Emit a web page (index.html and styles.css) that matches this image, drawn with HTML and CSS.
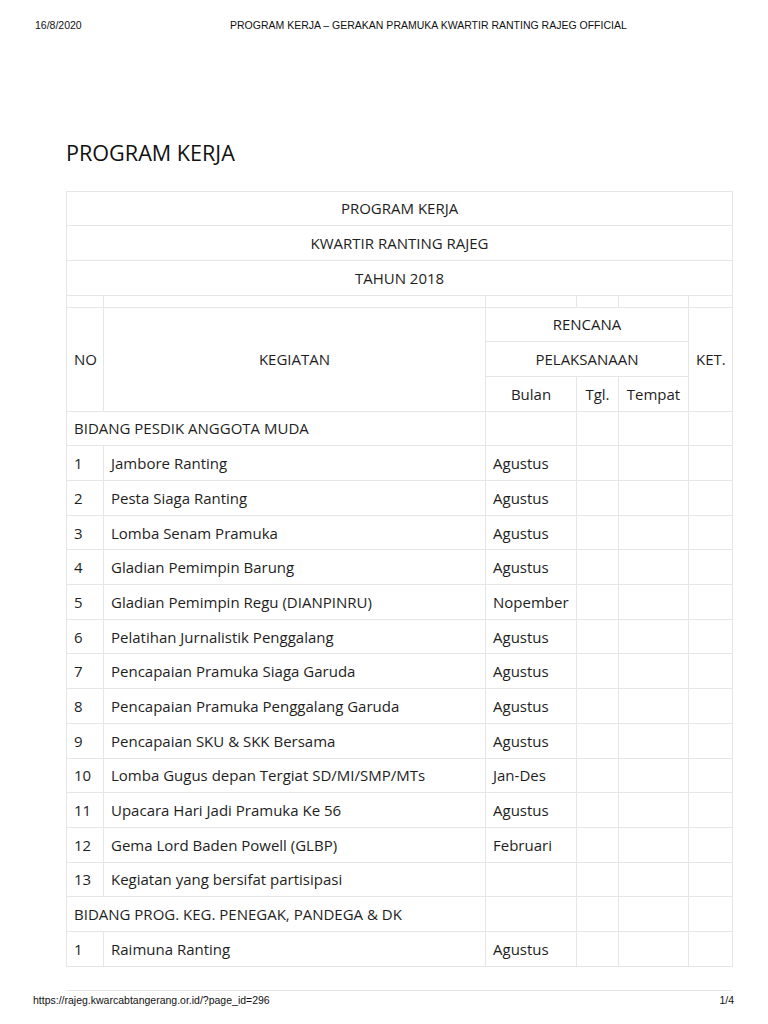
FILE: index.html
```html
<!DOCTYPE html>
<html lang="id">
<head>
<meta charset="utf-8">
<title>PROGRAM KERJA – GERAKAN PRAMUKA KWARTIR RANTING RAJEG OFFICIAL</title>
<link rel="stylesheet" href="styles.css">
</head>
<body>
<div class="page">
  <header class="print-head">
    <span class="print-date">16/8/2020</span>
    <span class="print-title">PROGRAM KERJA – GERAKAN PRAMUKA KWARTIR RANTING RAJEG OFFICIAL</span>
  </header>

  <main class="content">
    <h1 class="page-title">PROGRAM KERJA</h1>
    <table class="prog">
      <colgroup>
        <col class="c-no"><col class="c-keg"><col class="c-bulan"><col class="c-tgl"><col class="c-tempat"><col class="c-ket">
      </colgroup>
      <tbody>
        <tr><td colspan="6" class="center">PROGRAM KERJA</td></tr>
        <tr><td colspan="6" class="center">KWARTIR RANTING RAJEG</td></tr>
        <tr><td colspan="6" class="center">TAHUN 2018</td></tr>
        <tr class="spacer"><td></td><td></td><td></td><td></td><td></td><td></td></tr>
        <tr>
          <td rowspan="3">NO</td>
          <td rowspan="3" class="center">KEGIATAN</td>
          <td colspan="3" class="center">RENCANA</td>
          <td rowspan="3">KET.</td>
        </tr>
        <tr><td colspan="3" class="center">PELAKSANAAN</td></tr>
        <tr><td class="center">Bulan</td><td class="center">Tgl.</td><td class="center">Tempat</td></tr>
        <tr><td colspan="2">BIDANG PESDIK ANGGOTA MUDA</td><td></td><td></td><td></td><td></td></tr>
        <tr><td>1</td><td>Jambore Ranting</td><td>Agustus</td><td></td><td></td><td></td></tr>
        <tr><td>2</td><td>Pesta Siaga Ranting</td><td>Agustus</td><td></td><td></td><td></td></tr>
        <tr><td>3</td><td>Lomba Senam Pramuka</td><td>Agustus</td><td></td><td></td><td></td></tr>
        <tr><td>4</td><td>Gladian Pemimpin Barung</td><td>Agustus</td><td></td><td></td><td></td></tr>
        <tr><td>5</td><td>Gladian Pemimpin Regu (DIANPINRU)</td><td>Nopember</td><td></td><td></td><td></td></tr>
        <tr><td>6</td><td>Pelatihan Jurnalistik Penggalang</td><td>Agustus</td><td></td><td></td><td></td></tr>
        <tr><td>7</td><td>Pencapaian Pramuka Siaga Garuda</td><td>Agustus</td><td></td><td></td><td></td></tr>
        <tr><td>8</td><td>Pencapaian Pramuka Penggalang Garuda</td><td>Agustus</td><td></td><td></td><td></td></tr>
        <tr><td>9</td><td>Pencapaian SKU &amp; SKK Bersama</td><td>Agustus</td><td></td><td></td><td></td></tr>
        <tr><td>10</td><td>Lomba Gugus depan Tergiat SD/MI/SMP/MTs</td><td>Jan-Des</td><td></td><td></td><td></td></tr>
        <tr><td>11</td><td>Upacara Hari Jadi Pramuka Ke 56</td><td>Agustus</td><td></td><td></td><td></td></tr>
        <tr><td>12</td><td>Gema Lord Baden Powell (GLBP)</td><td>Februari</td><td></td><td></td><td></td></tr>
        <tr><td>13</td><td>Kegiatan yang bersifat partisipasi</td><td></td><td></td><td></td><td></td></tr>
        <tr><td colspan="2">BIDANG PROG. KEG. PENEGAK, PANDEGA &amp; DK</td><td></td><td></td><td></td><td></td></tr>
        <tr><td>1</td><td>Raimuna Ranting</td><td>Agustus</td><td></td><td></td><td></td></tr>
      </tbody>
    </table>
  </main>

  <footer class="print-foot">
    <div class="foot-rule"></div>
    <div class="foot-line">
      <span class="foot-url">https://rajeg.kwarcabtangerang.or.id/?page_id=296</span>
      <span class="foot-page">1/4</span>
    </div>
  </footer>
</div>
</body>
</html>
```

FILE: styles.css
```css
html, body {
  margin: 0;
  padding: 0;
  background: #ffffff;
}

.page {
  width: 768px;
  height: 1024px;
  display: flex;
  flex-direction: column;
  overflow: hidden;
}

.print-head {
  display: flex;
  align-items: center;
  padding: 18px 0 0 35px;
  height: 13px;
  font-family: "Liberation Sans", Arial, sans-serif;
  font-size: 10.5px;
  color: #111;
}

.print-date {
  width: 195px;
}

.print-title {
  white-space: nowrap;
}

.content {
  flex: 1;
  padding: 0 36px 0 66px;
  font-family: "Open Sans", "Noto Sans", sans-serif;
  color: #222;
}

.page-title {
  margin: 107px 0 0;
  font-size: 21.6px;
  font-weight: 400;
  line-height: 30px;
  color: #111;
}

.prog {
  margin-top: 22.5px;
  width: 666px;
  border-collapse: collapse;
  table-layout: fixed;
  font-size: 15px;
  color: #1e1e1e;
}

.c-no { width: 37px; }
.c-keg { width: 382px; }
.c-bulan { width: 91px; }
.c-tgl { width: 42px; }
.c-tempat { width: 70px; }
.c-ket { width: 44px; }

.prog td {
  border: 1px solid #e6e6e6;
  height: 33.7px;
  padding: 0 0 0 7px;
  vertical-align: middle;
  white-space: nowrap;
  line-height: 20px;
}

.prog td.center {
  text-align: center;
  padding: 0;
}

.prog tr.spacer td {
  height: 11px;
  padding: 0;
}

.print-foot {
  height: 34px;
  font-family: "Liberation Sans", Arial, sans-serif;
  font-size: 10.5px;
  color: #111;
}

.foot-rule {
  margin: 0 36px 0 66px;
  border-top: 1px solid #e6e6e6;
}

.foot-line {
  display: flex;
  justify-content: space-between;
  padding: 3px 34px 0 33px;
}
```
